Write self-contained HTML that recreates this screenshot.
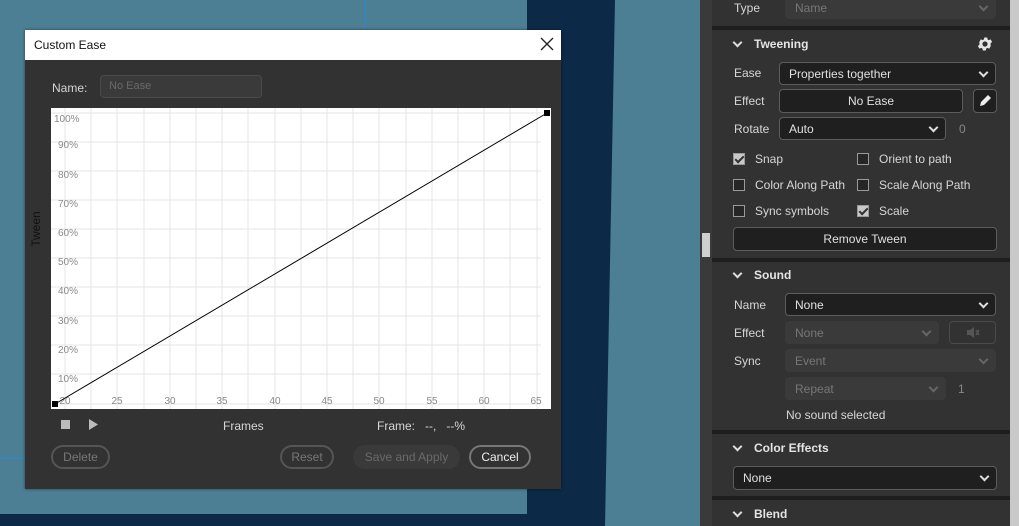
<!DOCTYPE html>
<html><head><meta charset="utf-8"><style>
*{box-sizing:border-box;margin:0;padding:0}
body{width:1019px;height:526px;overflow:hidden;position:relative;background:#4c7f94;font-family:"Liberation Sans",sans-serif;font-size:12px}
.a{position:absolute}
.t{position:absolute;color:#d6d6d6;font-size:12px;line-height:14px;white-space:nowrap}
.dd{position:absolute;background:#1f1f1f;border:1px solid #5c5c5c;border-radius:4px;color:#e0e0e0;font-size:12px;padding-left:9px;line-height:22px}
.dis{background:#3a3a3a;border-color:#3a3a3a;color:#777}
.chev{position:absolute;right:8px;top:6px;width:7px;height:7px;border-right:2px solid #ddd;border-bottom:2px solid #ddd;transform:rotate(45deg)}
.dis .chev{border-color:#666}
.cb{position:absolute;width:12px;height:12px;border:1px solid #9a9a9a;background:#262626}
.cb.on{background:#c8c8c8}
.cb.on:after{content:"";position:absolute;left:3px;top:0px;width:3px;height:7px;border-right:2px solid #333;border-bottom:2px solid #333;transform:rotate(45deg)}
.hdr{position:absolute;color:#e4e4e4;font-weight:bold;font-size:12px}
.hchev{position:absolute;width:7px;height:7px;border-right:2px solid #ddd;border-bottom:2px solid #ddd;transform:rotate(45deg)}
.div{position:absolute;left:712px;width:298px;height:4px;background:#1e1e1e}
.btn{position:absolute;border:2px solid #555;border-radius:12px;color:#777;text-align:center;line-height:20px;font-size:12px}
</style></head><body>
<div class="a" style="left:0;top:514px;width:530px;height:12px;background:#0c2a47"></div>
<svg class="a" style="left:0;top:0" width="712" height="526"><polygon points="527,0 615,0 605,526 515,526 515,514 527,514" fill="#0c2a47"/><line x1="365" y1="0" x2="365" y2="28" stroke="#2a8ad8" stroke-width="1"/><line x1="0" y1="458" x2="25" y2="458" stroke="#2a8ad8"/></svg>
<div class="a" style="left:700px;top:0;width:12px;height:526px;background:#3a3a3a"></div>
<div class="a" style="left:702px;top:233px;width:8px;height:24px;background:#cfcfcf"></div>
<div class="a" style="left:712px;top:0;width:298px;height:526px;background:#323232"></div>
<div class="a" style="left:1010px;top:0;width:9px;height:526px;background:#c9c9c9"></div>

<div class="a" style="left:25px;top:30px;width:536px;height:459px;background:#323232;box-shadow:0 0 3px rgba(0,0,0,.5)"></div>
<div class="a" style="left:25px;top:30px;width:536px;height:30px;background:#fff"></div>
<div class="t" style="left:34px;top:38px;color:#111;font-size:12px">Custom Ease</div>
<svg class="a" style="left:540px;top:37px" width="14" height="14"><path d="M1 1L13 13M13 1L1 13" stroke="#222" stroke-width="1.3"/></svg>
<div class="t" style="left:52px;top:81px">Name:</div>
<div class="a" style="left:100px;top:75px;width:162px;height:23px;background:#3a3a3a;border:1px solid #4a4a4a;border-radius:4px;color:#6a6a6a;padding-left:8px;line-height:21px;font-size:11px">No Ease</div>
<div class="t" style="left:16px;top:222px;color:#111;font-size:12px;transform:rotate(-90deg);transform-origin:center;width:40px;text-align:center">Tween</div>
<svg class="a" style="left:51px;top:108px" width="500" height="301">
<rect width="500" height="301" fill="#fff"/>
<g stroke="#e6e6e6" stroke-width="1">
<line x1="14" y1="0" x2="14" y2="301"/><line x1="40" y1="0" x2="40" y2="301"/><line x1="66" y1="0" x2="66" y2="301"/><line x1="93" y1="0" x2="93" y2="301"/><line x1="119" y1="0" x2="119" y2="301"/><line x1="145" y1="0" x2="145" y2="301"/><line x1="171" y1="0" x2="171" y2="301"/><line x1="197" y1="0" x2="197" y2="301"/><line x1="224" y1="0" x2="224" y2="301"/><line x1="250" y1="0" x2="250" y2="301"/><line x1="276" y1="0" x2="276" y2="301"/><line x1="302" y1="0" x2="302" y2="301"/><line x1="328" y1="0" x2="328" y2="301"/><line x1="355" y1="0" x2="355" y2="301"/><line x1="381" y1="0" x2="381" y2="301"/><line x1="407" y1="0" x2="407" y2="301"/><line x1="433" y1="0" x2="433" y2="301"/><line x1="459" y1="0" x2="459" y2="301"/><line x1="486" y1="0" x2="486" y2="301"/>
<line x1="0" y1="5" x2="490" y2="5"/><line x1="0" y1="34" x2="490" y2="34"/><line x1="0" y1="63" x2="490" y2="63"/><line x1="0" y1="92" x2="490" y2="92"/><line x1="0" y1="121" x2="490" y2="121"/><line x1="0" y1="150" x2="490" y2="150"/><line x1="0" y1="179" x2="490" y2="179"/><line x1="0" y1="208" x2="490" y2="208"/><line x1="0" y1="237" x2="490" y2="237"/><line x1="0" y1="266" x2="490" y2="266"/><line x1="0" y1="296" x2="490" y2="296"/>
</g>
<g fill="#8a8a8a" font-size="10" font-family="Liberation Sans,sans-serif">
<text x="3" y="14">100%</text><text x="7" y="40">90%</text><text x="7" y="70">80%</text><text x="7" y="99">70%</text><text x="7" y="128">60%</text><text x="7" y="157">50%</text><text x="7" y="186">40%</text><text x="7" y="216">30%</text><text x="7" y="245">20%</text><text x="7" y="274">10%</text>
<g text-anchor="middle"><text x="14" y="296">20</text><text x="66" y="296">25</text><text x="119" y="296">30</text><text x="171" y="296">35</text><text x="224" y="296">40</text><text x="276" y="296">45</text><text x="328" y="296">50</text><text x="381" y="296">55</text><text x="433" y="296">60</text><text x="485" y="296">65</text></g>
</g>
<line x1="4" y1="296" x2="496" y2="5" stroke="#000" stroke-width="1"/>
<rect x="1" y="293" width="6" height="6" fill="#000"/><rect x="493" y="2" width="6" height="6" fill="#000"/>
</svg>
<div class="a" style="left:61px;top:420px;width:9px;height:9px;background:#bbb"></div>
<svg class="a" style="left:89px;top:419px" width="10" height="11"><path d="M0 0L9 5.5L0 11Z" fill="#bbb"/></svg>
<div class="t" style="left:223px;top:419px">Frames</div>
<div class="t" style="left:377px;top:419px">Frame:&nbsp;&nbsp; --,&nbsp;&nbsp; --%</div>
<div class="btn" style="left:51px;top:445px;width:59px;height:24px">Delete</div>
<div class="btn" style="left:280px;top:445px;width:54px;height:24px">Reset</div>
<div class="btn" style="left:353px;top:445px;width:107px;height:24px;background:#3a3a3a;border-color:#3a3a3a;color:#6a6a6a">Save and Apply</div>
<div class="btn" style="left:469px;top:445px;width:62px;height:24px;color:#eee;border-color:#777">Cancel</div>

<div class="t" style="left:734px;top:1px">Type</div>
<div class="dd dis" style="left:785px;top:-4px;width:211px;height:23px">Name<div class="chev"></div></div>
<div class="div" style="top:26px"></div>
<div class="hchev" style="left:734px;top:39px"></div>
<div class="hdr" style="left:754px;top:37px">Tweening</div>
<svg class="a" style="left:976px;top:35px" width="18" height="18" viewBox="0 0 24 24"><path fill="#e6e6e6" d="M19.4 13a7.5 7.5 0 0 0 0-2l2.1-1.6-2-3.5-2.5 1a7 7 0 0 0-1.700-1L15 3.3h-4l-.4 2.6a7 7 0 0 0-1.7 1l-2.5-1-2 3.5L4.6 11a7.5 7.5 0 0 0 0 2l-2.1 1.6 2 3.5 2.5-1a7 7 0 0 0 1.7 1l.4 2.6h4l.4-2.6a7 7 0 0 0 1.7-1l2.5 1 2-3.5zM12 15.5a3.5 3.5 0 1 1 0-7 3.5 3.5 0 0 1 0 7z"/></svg>
<div class="t" style="left:734px;top:66px">Ease</div>
<div class="dd" style="left:779px;top:62px;width:217px;height:23px">Properties together<div class="chev"></div></div>
<div class="t" style="left:734px;top:94px">Effect</div>
<div class="dd" style="left:779px;top:89px;width:184px;height:24px;text-align:center;padding:0">No Ease</div>
<div class="dd" style="left:973px;top:89px;width:24px;height:24px;padding:0"><svg width="22" height="22"><path d="M6 16l1-4 7-7 3 3-7 7z" fill="#eee"/></svg></div>
<div class="t" style="left:734px;top:122px">Rotate</div>
<div class="dd" style="left:779px;top:117px;width:167px;height:23px">Auto<div class="chev"></div></div>
<div class="t" style="left:959px;top:122px;color:#888">0</div>
<div class="cb on" style="left:733px;top:153px"></div><div class="t" style="left:755px;top:152px">Snap</div>
<div class="cb" style="left:857px;top:153px"></div><div class="t" style="left:879px;top:152px">Orient to path</div>
<div class="cb" style="left:733px;top:179px"></div><div class="t" style="left:755px;top:178px">Color Along Path</div>
<div class="cb" style="left:857px;top:179px"></div><div class="t" style="left:879px;top:178px">Scale Along Path</div>
<div class="cb" style="left:733px;top:205px"></div><div class="t" style="left:755px;top:204px">Sync symbols</div>
<div class="cb on" style="left:857px;top:205px"></div><div class="t" style="left:879px;top:204px">Scale</div>
<div class="dd" style="left:733px;top:227px;width:264px;height:24px;text-align:center;padding:0">Remove Tween</div>
<div class="div" style="top:258px"></div>
<div class="hchev" style="left:734px;top:270px"></div>
<div class="hdr" style="left:754px;top:268px">Sound</div>
<div class="t" style="left:734px;top:298px">Name</div>
<div class="dd" style="left:785px;top:293px;width:211px;height:23px">None<div class="chev"></div></div>
<div class="t" style="left:734px;top:326px">Effect</div>
<div class="dd dis" style="left:785px;top:321px;width:154px;height:23px">None<div class="chev"></div></div>
<div class="dd" style="left:949px;top:321px;width:47px;height:23px;background:#323232;border-color:#4a4a4a;padding:0"><svg width="45" height="21"><path d="M17 8h3l4-3v11l-4-3h-3z" fill="#555"/><path d="M26 8l3 5M29 8l-3 5" stroke="#555" stroke-width="1.5"/></svg></div>
<div class="t" style="left:734px;top:354px">Sync</div>
<div class="dd dis" style="left:785px;top:349px;width:211px;height:23px">Event<div class="chev"></div></div>
<div class="dd dis" style="left:785px;top:377px;width:161px;height:23px">Repeat<div class="chev"></div></div>
<div class="t" style="left:958px;top:382px;color:#888">1</div>
<div class="t" style="left:786px;top:408px">No sound selected</div>
<div class="div" style="top:430px"></div>
<div class="hchev" style="left:734px;top:443px"></div>
<div class="hdr" style="left:754px;top:441px">Color Effects</div>
<div class="dd" style="left:733px;top:466px;width:264px;height:24px">None<div class="chev"></div></div>
<div class="div" style="top:496px"></div>
<div class="hchev" style="left:734px;top:509px"></div>
<div class="hdr" style="left:754px;top:507px">Blend</div>
</body></html>
